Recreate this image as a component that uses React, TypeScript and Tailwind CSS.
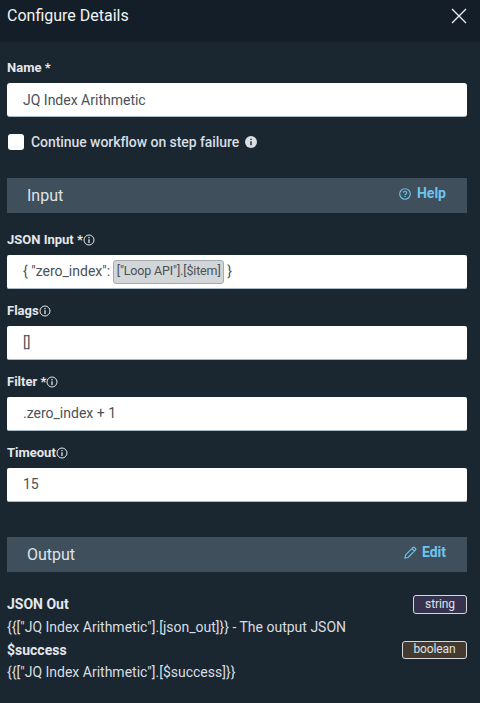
import React from "react";

const InfoOutline = ({ className = "" }: { className?: string }) => (
  <svg viewBox="0 0 12 12" className={`w-[12px] h-[12px] ${className}`} fill="none" stroke="currentColor">
    <circle cx="6" cy="6" r="5" strokeWidth="1" />
    <path d="M6 5.2V9M6 3v1.2" strokeWidth="1.3" />
  </svg>
);

const Label = ({ text, mt }: { text: string; mt: string }) => (
  <div className={`flex items-center h-[18px] text-[13px] font-bold text-[#e4e8ec] ${mt}`}>
    <span>{text}</span>
    <InfoOutline className="text-[#e4e8ec]" />
  </div>
);

const Field = ({ children }: { children: React.ReactNode }) => (
  <div className="mt-[6px] h-[34px] bg-white rounded-[2px] border-b border-[#a9bac8] pl-[16px] flex items-center text-[14px] text-[#4a5157]">
    {children}
  </div>
);

export default function App() {
  return (
    <div className="w-[480px] h-[703px] bg-[#1a2630] overflow-hidden font-['Roboto',sans-serif]">
      <div className="h-[42px] bg-[#141e28] flex items-start justify-between pl-[7px] pr-[13px] pt-[5px]">
        <span className="text-[16px] leading-[22px] text-[#f1f4f6]">Configure Details</span>
        <svg viewBox="0 0 16 16" className="w-[16px] h-[16px] mt-[3px] text-[#eef1f3]" fill="none" stroke="currentColor" strokeWidth="1.3">
          <path d="M1 1l14 14M15 1L1 15" />
        </svg>
      </div>
      <div className="pl-[7px] pr-[13px]">
        <div className="mt-[17px] h-[18px] flex items-center text-[13px] font-bold text-[#e4e8ec]">Name *</div>
        <div className="mt-[6px] h-[34px] bg-white rounded-[3px] border-b border-[#a9bac8] pl-[16px] pt-[2px] flex items-center text-[14px] text-[#4a5157]">
          JQ Index Arithmetic
        </div>
        <div className="mt-[17px] h-[16px] flex items-center">
          <div className="w-[16px] h-[16px] ml-[1px] bg-white rounded-[3px]" />
          <span className="ml-[7px] text-[14px] font-medium tracking-[-0.06px] text-[#d8dee3]">Continue workflow on step failure</span>
          <svg viewBox="0 0 12 12" className="w-[12px] h-[12px] ml-[6px]">
            <circle cx="6" cy="6" r="6" fill="#d8dee3" />
            <path d="M6 5.2V9.2M6 2.8v1.2" stroke="#1a2630" strokeWidth="1.4" />
          </svg>
        </div>
        <div className="mt-[28px] h-[35px] bg-[#404f5c] flex items-center justify-between pl-[20px] pr-[21px]">
          <span className="text-[16px] text-[#dfe4e8]">Input</span>
          <span className="flex items-center gap-[6px] text-[14px] font-bold text-[#6cc5ef] -mt-[4px]">
            <svg viewBox="0 0 12 12" className="w-[12px] h-[12px]" fill="none" stroke="currentColor">
              <circle cx="6" cy="6" r="5.3" strokeWidth="1.1" />
              <path d="M4.4 4.8c0-2.1 3.3-2.1 3.3 0 0 1.2-1.7 1.2-1.7 2.4M6 8v1.1" strokeWidth="1.1" />
            </svg>
            Help
          </span>
        </div>
        <Label text="JSON Input *" mt="mt-[18px]" />
        <div className="mt-[6px] h-[34px] bg-white rounded-[2px] border-b border-[#a9bac8] pl-[16px] flex items-center text-[14px] text-[#4a5157]">
          <span>{'{ "zero_index":'}</span>
          <span className="ml-[3px] h-[24px] w-[111px] px-[3px] flex items-center justify-center whitespace-nowrap bg-[#d2d6d9] border border-[#a4abb0] rounded-[3px] text-[12.5px] tracking-[-0.15px]">["Loop API"].[$item]</span>
          <span className="ml-[3px]">{"}"}</span>
        </div>
        <Label text="Flags" mt="mt-[13px]" />
        <Field>[]</Field>
        <Label text="Filter *" mt="mt-[13px]" />
        <Field>.zero_index + 1</Field>
        <Label text="Timeout" mt="mt-[13px]" />
        <Field>15</Field>
        <div className="mt-[35px] h-[35px] bg-[#404f5c] flex items-center justify-between pl-[20px] pr-[21px]">
          <span className="text-[16px] text-[#dfe4e8]">Output</span>
          <span className="flex items-center gap-[5px] text-[14px] font-bold text-[#6cc5ef] -mt-[4px]">
            <svg viewBox="0 0 14 14" className="w-[13px] h-[13px]" fill="none" stroke="currentColor" strokeWidth="1.2">
              <path d="M1 13l.7-3.4L9.8 1.5a1 1 0 0 1 1.4 0l1.3 1.3a1 1 0 0 1 0 1.4L4.4 12.3zM8.6 2.7l2.7 2.7" />
            </svg>
            Edit
          </span>
        </div>
        <div className="mt-[23px] h-[19px] flex items-center justify-between text-[14px] font-bold text-[#e4e8ec]">
          <span>JSON Out</span>
          <span className="w-[54px] h-[19px] pb-[2px] flex items-center justify-center bg-[#37334f] border border-[#d5d9de] rounded-[3px] text-[12px] font-normal tracking-[-0.1px] text-[#dfe2e6]">string</span>
        </div>
        <div className="mt-[3px] h-[20px] flex items-center text-[14px] text-[#d8dee3]">{'{{["JQ Index Arithmetic"].[json_out]}} - The output JSON'}</div>
        <div className="mt-[4px] h-[18px] flex items-center justify-between text-[14px] font-bold text-[#e4e8ec]">
          <span>$success</span>
          <span className="w-[65px] h-[18px] pb-[2px] flex items-center justify-center bg-[#453a30] border border-[#d5d9de] rounded-[3px] text-[12px] font-normal tracking-[-0.1px] text-[#dfe2e6]">boolean</span>
        </div>
        <div className="mt-[3px] h-[20px] flex items-center text-[14px] text-[#d8dee3]">{'{{["JQ Index Arithmetic"].[$success]}}'}</div>
      </div>
    </div>
  );
}
